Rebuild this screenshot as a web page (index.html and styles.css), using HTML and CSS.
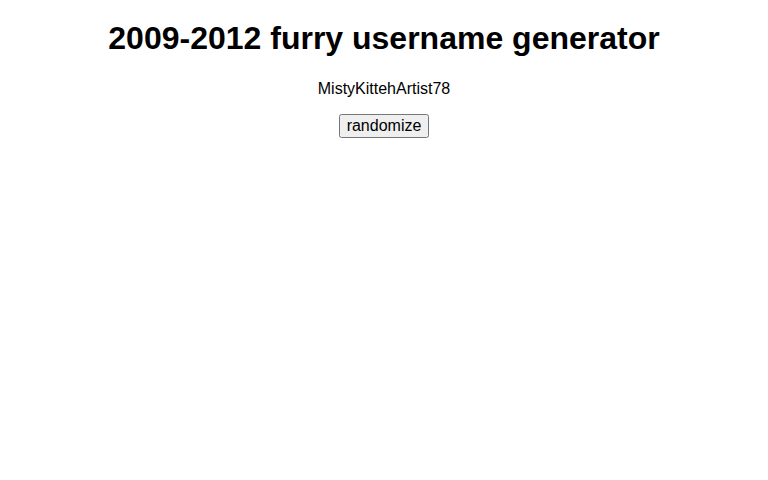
FILE: index.html
```html
<!DOCTYPE html>
<html>
<head>
<meta charset="utf-8">
<link rel="stylesheet" href="styles.css">
</head>
<body>
<h1 class="title">2009-2012 furry username generator</h1>
<p class="name">MistyKittehArtist78</p>
<div class="actions"><button class="btn">randomize</button></div>
</body>
</html>
```
FILE: styles.css
```css
body {
  margin: 0 8px 8px;
  font-family: "Liberation Sans", Arial, sans-serif;
  text-align: center;
  color: #000;
  background: #fff;
}
.title {
  font-size: 32px;
  font-weight: bold;
  margin: 20px 0 23px;
}
.name {
  font-size: 16px;
  margin: 0 0 16px;
}
.btn {
  font-family: "Liberation Sans", Arial, sans-serif;
  font-size: 16px;
}
```
